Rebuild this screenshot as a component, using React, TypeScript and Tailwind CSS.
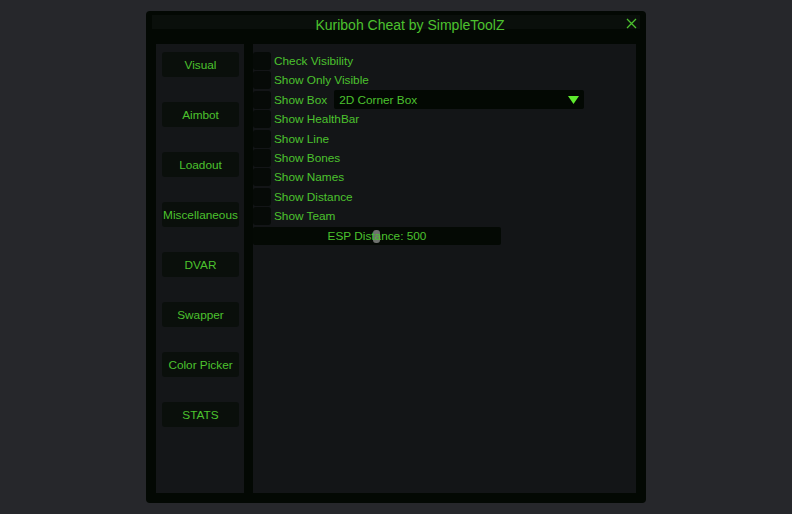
import { useState } from "react";

const tabs = [
  "Visual",
  "Aimbot",
  "Loadout",
  "Miscellaneous",
  "DVAR",
  "Swapper",
  "Color Picker",
  "STATS",
];

const options = [
  "Check Visibility",
  "Show Only Visible",
  "Show Box",
  "Show HealthBar",
  "Show Line",
  "Show Bones",
  "Show Names",
  "Show Distance",
  "Show Team",
];

function CheckRow({ label }: { label: string }) {
  return (
    <div className="flex h-[18px] items-center">
      <div className="h-[18px] w-[18px] rounded-[3px] bg-[#060a07]" />
      <span className="ml-[3px] translate-y-[1px] leading-none">{label}</span>
      {label === "Show Box" && (
        <div className="ml-[7px] flex h-[19px] w-[250px] items-center justify-between rounded-[2px] bg-[#030803] pl-[5px] pr-[5px]">
          <span className="translate-y-[1px] leading-none">2D Corner Box</span>
          <svg width="11" height="8" viewBox="0 0 11 8">
            <polygon points="0,0 11,0 5.5,8" fill="#5eea2e" />
          </svg>
        </div>
      )}
    </div>
  );
}

export default function App() {
  const [active] = useState("Visual");

  return (
    <div
      className="flex h-[514px] w-[792px] items-start justify-center bg-[#26272b] pt-[11px] text-[11.8px] text-[#4cc22e]"
      style={{ fontFamily: "'Liberation Sans', Arial, sans-serif" }}
    >
      <div className="flex h-[492px] w-[500px] flex-col rounded-[4px] bg-[#030803]">
        {/* Title bar */}
        <div className="relative flex h-[33px] items-center justify-center pl-[28px]">
          <div className="absolute inset-x-[6px] top-[4px] h-[14px] bg-[#0c110e] opacity-80" />
          <span className="relative -mt-[4px] text-[14px]">Kuriboh Cheat by SimpleToolZ</span>
          <svg
            className="absolute right-[9px] top-[7px]"
            width="11"
            height="11"
            viewBox="0 0 11 11"
          >
            <path d="M1 1 L10 10 M10 1 L1 10" stroke="#4cc22e" strokeWidth="1.3" />
          </svg>
        </div>

        <div className="flex flex-1 gap-[9px] px-[10px] pb-[10px]">
          {/* Tabs */}
          <div className="flex w-[88px] flex-col gap-[25px] bg-[#141618] px-[6px] pt-[8px]">
            {tabs.map((t) => (
              <div
                key={t}
                className={`flex h-[25px] w-[77px] items-center justify-center rounded-[3px] ${
                  t === active ? "bg-[#0a0f0b]" : "bg-[#0a0f0b]"
                }`}
              >
                <span className="translate-y-[1px] leading-none whitespace-nowrap">{t}</span>
              </div>
            ))}
          </div>

          {/* Content */}
          <div className="flex flex-1 flex-col bg-[#131517] pt-[8px]">
            <div className="flex flex-col gap-[1.4px]">
              {options.map((o) => (
                <CheckRow key={o} label={o} />
              ))}
            </div>
            <div className="relative mt-[1.4px] flex h-[18px] w-[248px] items-center justify-center rounded-[2px] bg-[#040904]">
              <div className="absolute left-[120px] top-[3px] h-[13px] w-[7px] rounded-[3px] bg-[#6e716e]" />
              <span className="relative translate-y-[1px] leading-none">ESP Distance: 500</span>
            </div>
          </div>
        </div>
      </div>
    </div>
  );
}
